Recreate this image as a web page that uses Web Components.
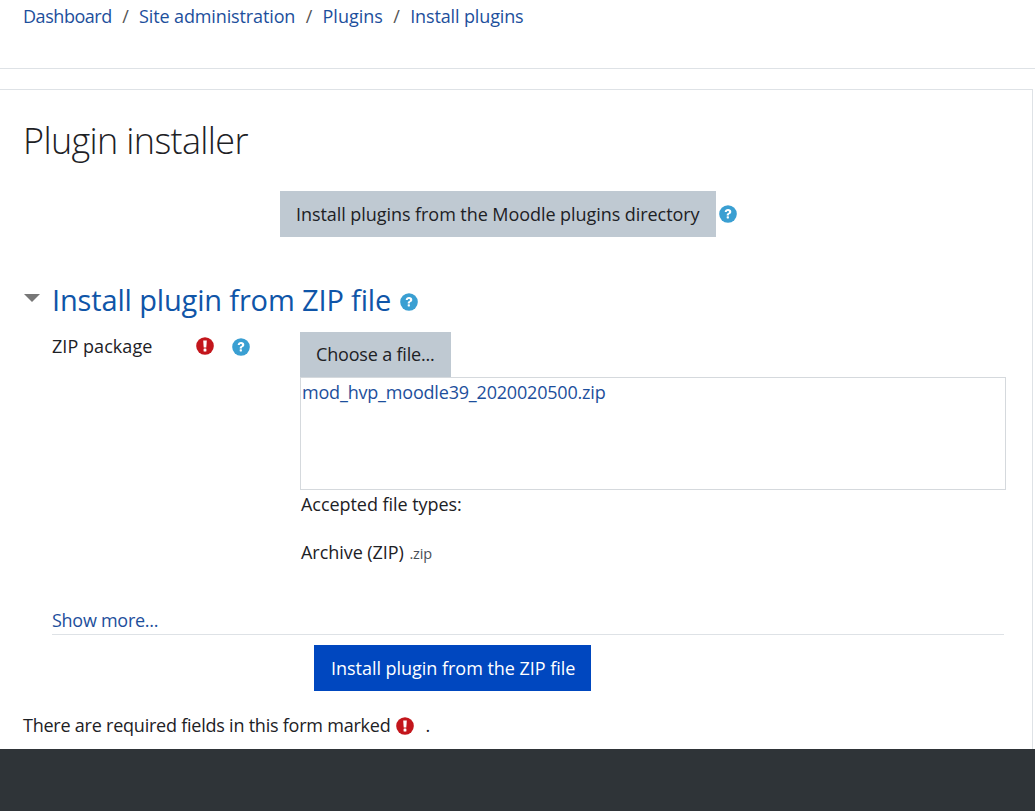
<!DOCTYPE html>
<html><head><meta charset="utf-8">
<style>
html,body{margin:0;padding:0;background:#fff}
body{font-family:"Open Sans","Noto Sans",sans-serif;color:#1d2125;width:1035px;height:811px;overflow:hidden}
</style></head><body>
<m-page></m-page>
<script>
const Q='<svg viewBox="0 0 18 18" width="18" height="18"><circle cx="9" cy="9" r="8.8" fill="#3a9fd2"/><path d="M5.7 7C5.8 5.1 7.2 4 9.1 4c1.8 0 3.2 1.1 3.2 2.7 0 1.2-.7 1.9-1.6 2.4-.6.4-.8.6-.8 1.3H7.7c0-1.2.4-1.8 1.3-2.3.6-.4 1-.7 1-1.2 0-.6-.5-1-1.1-1-.7 0-1.1.5-1.2 1.2z" fill="#fff"/><rect x="7.7" y="11.3" width="2.2" height="2.2" rx=".4" fill="#fff"/></svg>';
const E='<svg viewBox="0 0 18 18" width="18" height="18"><circle cx="9" cy="9" r="8.8" fill="#c3161c"/><path d="M7.2 3.6h3.6l-.5 6.8H7.7z" fill="#fff"/><rect x="7.6" y="11.6" width="2.8" height="2.8" rx=".5" fill="#fff"/></svg>';
function def(name,css,html){customElements.define(name,class extends HTMLElement{connectedCallback(){if(this.shadowRoot)return;this.attachShadow({mode:'open'}).innerHTML='<style>'+css+'</style>'+(typeof html==='function'?html(this):html)}})}
def('m-icon',':host{display:inline-flex;width:18px;height:18px}',h=>h.getAttribute('type')==='e'?E:Q);
def('m-btn',`:host{display:inline-flex;align-items:center;height:46px;padding:0 16px;background:#bfc9d2;color:#1d2125;font-size:18px;letter-spacing:-.06px;white-space:nowrap}
:host([small]){height:45px;letter-spacing:-.18px;padding-bottom:1px;box-sizing:border-box}
:host([primary]){background:#0047bf;color:#fff;letter-spacing:-.03px;padding:0 16px 0 17px}`,'<slot></slot>');
def('m-page',`:host{display:flex;flex-direction:column;height:811px;color:#1d2125;font-size:18px;letter-spacing:-.2px}
.crumbs{display:flex;height:64px;padding:4px 0 0 23px;line-height:25px;color:#1d4f9c;border-bottom:1px solid #dee2e6;flex:none;letter-spacing:-.13px}
.crumbs i{font-style:normal;color:#555;margin:0 10.4px}
.card{flex:none;height:659px;margin-top:20px;margin-right:2px;border:1px solid #dee2e6;border-left:0;border-bottom:0;display:flex;flex-direction:column}
h1{font-weight:300;font-size:36px;letter-spacing:-.65px;margin:0;padding:27px 0 0 23px;line-height:48px;height:48px;flex:none}
.dir{display:flex;align-items:center;margin:26px 0 0 280px;gap:3px;flex:none}
.sec{display:flex;align-items:center;margin:41px 0 0 24px;height:44px;flex:none}
.tri{width:0;height:0;border:8px solid transparent;border-top:8px solid #777;border-bottom:0;margin-top:-5px}
h2{font-weight:400;font-size:29px;letter-spacing:-.15px;color:#0f55a8;margin:0 0 0 12px;line-height:44px}
.sec m-icon{margin-left:9px;margin-top:3px}
.row{display:flex;margin-top:10px;height:253px;flex:none}
.lab{width:300px;flex:none;display:flex;align-items:flex-start;padding:2px 0 0 52px;box-sizing:border-box;line-height:25px}
.lab span{width:144px;flex:none;letter-spacing:.05px}
.lab m-icon:last-child{margin-left:18px;margin-top:4px}
.lab m-icon:first-of-type{margin-top:3px}
.fld{flex:1;display:flex;flex-direction:column;margin-right:26px}
.box{height:113px;border:1px solid #d5d9dd;color:#1d4f9c;padding:2px 1px;line-height:25px;box-sizing:border-box;flex:none;letter-spacing:-.19px}
.txt{line-height:25px;margin-top:2px;letter-spacing:-.05px;padding-left:1px}
small{font-size:14.5px;letter-spacing:-.2px;color:#495057;margin-left:1px}
.more{margin:23px 28px 0 52px;height:25px;line-height:25px;color:#1d4f9c;border-bottom:1px solid #dee2e6;padding-bottom:1px;flex:none;letter-spacing:-.28px}
.sub{margin:10px 0 0 314px;flex:none}
.req{display:flex;align-items:center;margin:22px 0 0 23px;line-height:25px;flex:none;letter-spacing:-.23px}
.req m-icon{margin:0 11px 0 6px}
footer{flex:1;background:#2f3438}`,
`<nav class="crumbs"><span style="letter-spacing:-.45px">Dashboard</span><i>/</i><span>Site administration</span><i>/</i><span style="letter-spacing:0">Plugins</span><i>/</i><span>Install plugins</span></nav>
<main class="card">
<h1>Plugin installer</h1>
<div class="dir"><m-btn>Install plugins from the Moodle plugins directory</m-btn><m-icon></m-icon></div>
<div class="sec"><b class="tri"></b><h2>Install plugin from ZIP file</h2><m-icon></m-icon></div>
<div class="row"><div class="lab"><span>ZIP package</span><m-icon type="e"></m-icon><m-icon></m-icon></div>
<div class="fld"><div style="height:45px;flex:none"><m-btn small>Choose a file...</m-btn></div><div class="box">mod_hvp_moodle39_2020020500.zip</div><div class="txt">Accepted file types:</div><div class="txt" style="margin-top:23px">Archive (ZIP) <small>.zip</small></div></div></div>
<div class="more">Show more...</div>
<div class="sub"><m-btn primary>Install plugin from the ZIP file</m-btn></div>
<div class="req">There are required fields in this form marked<m-icon type="e"></m-icon>.</div>
</main>
<footer></footer>`);
</script></body></html>
